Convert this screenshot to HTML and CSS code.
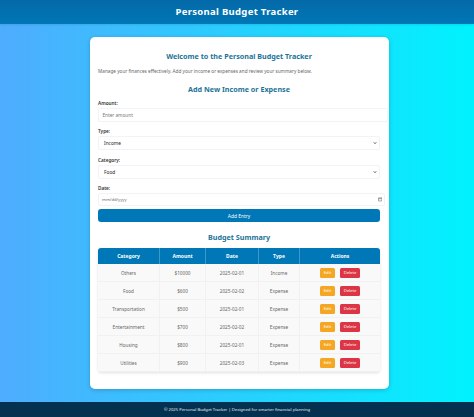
FILE: index.html
```html
<!DOCTYPE html>
<html lang="en">
<head>
  <meta charset="UTF-8" />
  <meta name="viewport" content="width=device-width, initial-scale=1.0"/>
  <title>Personal Budget Tracker</title>
  <link rel="stylesheet" href="styles.css">
</head>
<body>
  <header class="top-bar">Personal Budget Tracker</header>

  <main class="card">
    <h2 class="welcome">Welcome to the Personal Budget Tracker</h2>
    <p class="intro">Manage your finances effectively. Add your income or expenses and review your summary below.</p>

    <h2 class="add-title">Add New Income or Expense</h2>
    <form class="entry-form">
      <label>Amount:</label>
      <div class="field field-amount"><span class="placeholder">Enter amount</span></div>

      <label>Type:</label>
      <div class="field field-select">
        <span>Income</span>
        <svg class="chevron" viewBox="0 0 8 8"><path d="M1.5 2.5 L4 5.5 L6.5 2.5" fill="none" stroke="#333" stroke-width="1.4"/></svg>
      </div>

      <label>Category:</label>
      <div class="field field-select">
        <span>Food</span>
        <svg class="chevron" viewBox="0 0 8 8"><path d="M1.5 2.5 L4 5.5 L6.5 2.5" fill="none" stroke="#333" stroke-width="1.4"/></svg>
      </div>

      <label>Date:</label>
      <div class="field field-date">
        <span class="date-text">mm/dd/yyyy</span>
        <svg class="calendar" viewBox="0 0 8 8"><path d="M1 1.5 H7 V7 H1 Z M1 3 H7" fill="none" stroke="#666" stroke-width="1"/></svg>
      </div>

      <button type="button" class="add-btn">Add Entry</button>
    </form>

    <h2 class="summary-title">Budget Summary</h2>
    <table class="summary">
      <thead>
        <tr><th>Category</th><th>Amount</th><th>Date</th><th>Type</th><th>Actions</th></tr>
      </thead>
      <tbody>
        <tr><td>Others</td><td>$10000</td><td>2025-02-01</td><td>Income</td><td><button class="edit">Edit</button><button class="delete">Delete</button></td></tr>
        <tr><td>Food</td><td>$600</td><td>2025-02-02</td><td>Expense</td><td><button class="edit">Edit</button><button class="delete">Delete</button></td></tr>
        <tr><td>Transportation</td><td>$500</td><td>2025-02-01</td><td>Expense</td><td><button class="edit">Edit</button><button class="delete">Delete</button></td></tr>
        <tr><td>Entertainment</td><td>$700</td><td>2025-02-02</td><td>Expense</td><td><button class="edit">Edit</button><button class="delete">Delete</button></td></tr>
        <tr><td>Housing</td><td>$800</td><td>2025-02-01</td><td>Expense</td><td><button class="edit">Edit</button><button class="delete">Delete</button></td></tr>
        <tr><td>Utilities</td><td>$900</td><td>2025-02-03</td><td>Expense</td><td><button class="edit">Edit</button><button class="delete">Delete</button></td></tr>
      </tbody>
    </table>
  </main>

  <footer class="bottom-bar">© 2025 Personal Budget Tracker | Designed for smarter financial planning</footer>
</body>
</html>
```

FILE: styles.css
```css
html, body {
  height: 417px;
  overflow: hidden;
}

body {
  margin: 0;
  font-family: "Noto Sans", "Open Sans", sans-serif;
  background: linear-gradient(to right, #4facfe, #00f2fe);
  color: #333;
  display: flex;
  flex-direction: column;
}

.top-bar {
  height: 24px;
  line-height: 24px;
  background: linear-gradient(to bottom, #0469a8, #0077b6);
  color: #fff;
  text-align: center;
  font-size: 9.5px;
  font-weight: 700;
  letter-spacing: 0.3px;
  box-shadow: 0 1px 2px rgba(0,0,0,0.1);
}

.card {
  width: 299px;
  height: 352px;
  box-sizing: border-box;
  margin: 13px 0 0 89.5px;
  padding: 13px 8.5px 0;
  background: #fff;
  border-radius: 5px;
  box-shadow: 0 1px 4px rgba(0,0,0,0.2);
}

h2 {
  margin: 0;
  text-align: center;
  font-size: 7.2px;
  line-height: 12px;
  font-weight: 700;
  color: #1c7397;
}

.intro {
  margin: 5px 0 0;
  font-size: 4.7px;
  line-height: 8px;
  color: #666;
}

.add-title {
  margin-top: 8px;
}

.entry-form {
  margin-top: 4px;
}

.entry-form label {
  display: block;
  font-size: 4.7px;
  line-height: 8px;
  font-weight: 600;
  color: #333;
}

.field {
  box-sizing: border-box;
  height: 14px;
  margin: 1px 0 5.3px;
  padding: 0 2px 0 5px;
  background: #fff;
  border: 0.5px solid #f3f3f3;
  border-radius: 2px;
  font-size: 4.8px;
  display: flex;
  align-items: center;
  justify-content: space-between;
  color: #222;
}

.field-amount {
  width: 290px;
  padding-left: 3.5px;
}

.field-select {
  width: 282px;
}

.field-date {
  width: 287px;
  height: 13.5px;
  padding-left: 3px;
  margin-bottom: 2.5px;
}

.placeholder {
  color: #777;
  font-size: 4.7px;
}

.date-text {
  font-size: 4.2px;
  color: #666;
}

.chevron {
  width: 4px;
  height: 4px;
}

.calendar {
  width: 4.5px;
  height: 4.5px;
}

.add-btn {
  display: block;
  width: 282px;
  height: 13.5px;
  padding: 0;
  border: none;
  border-radius: 3px;
  background: #0077b6;
  color: #fff;
  font-family: inherit;
  font-size: 4.9px;
}

.summary-title {
  margin-top: 9px;
}

.summary {
  width: 282px;
  margin-top: 5px;
  border-collapse: separate;
  border-spacing: 0;
  table-layout: fixed;
  border-radius: 3px;
  box-shadow: 0 1px 3px rgba(0,0,0,0.12);
  font-size: 4.7px;
}

.summary th:nth-child(1) { width: 62px; }
.summary th:nth-child(2) { width: 46px; }
.summary th:nth-child(3) { width: 53px; }
.summary th:nth-child(4) { width: 41px; }

.summary th {
  box-sizing: border-box;
  height: 16px;
  padding: 0;
  background: #0077b6;
  color: #fff;
  font-weight: 700;
  font-size: 5px;
  border-right: 0.5px solid #3d97c8;
}

.summary th:first-child { border-top-left-radius: 3px; }
.summary th:last-child { border-top-right-radius: 3px; border-right: none; }

.summary td {
  height: 18px;
  padding: 0;
  box-sizing: border-box;
  background: #f9f9f9;
  color: #666;
  text-align: center;
  border-right: 0.5px solid #f1f1f1;
  border-bottom: 0.5px solid #f1f1f1;
}

.summary td:last-child { border-right: none; }

.edit, .delete {
  height: 10px;
  padding: 0;
  border: none;
  border-radius: 1.5px;
  color: #fff;
  font-family: inherit;
  font-size: 4.2px;
  vertical-align: middle;
}

.edit {
  width: 15.5px;
  background: #f5a623;
  margin-right: 4.5px;
}

.delete {
  width: 20.5px;
  background: #dc3545;
}

.bottom-bar {
  margin-top: 13px;
  height: 15px;
  line-height: 15px;
  background: #03314f;
  color: #e6eef2;
  text-align: center;
  font-size: 4.2px;
}
```
